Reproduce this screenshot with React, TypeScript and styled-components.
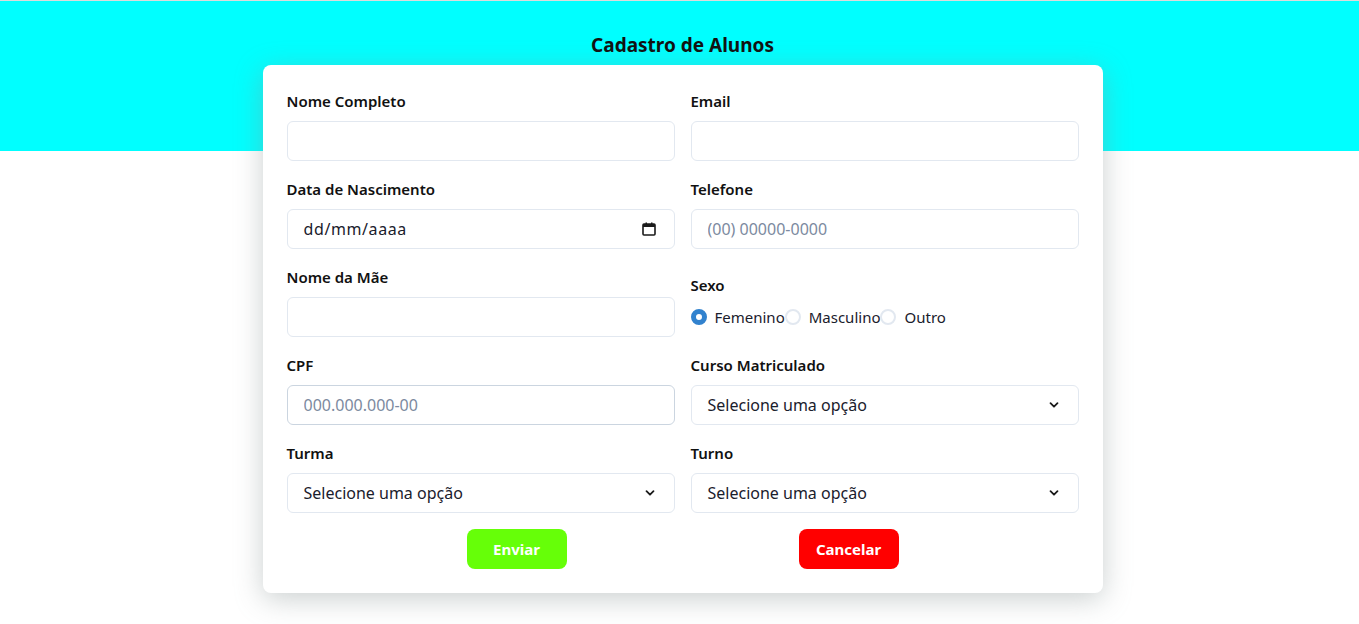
import React from "react";
import styled, { createGlobalStyle } from "styled-components";

const Global = createGlobalStyle`
  * { box-sizing: border-box; }
  html, body { margin: 0; padding: 0; background: #ffffff; }
  body { font-family: "Noto Sans", "Open Sans", sans-serif; color: #1a202c; }
`;

const Page = styled.div`
  min-height: 624px;
  border-top: 1px solid #dcdcdc;
`;

const Header = styled.header`
  height: 150px;
  background: #00ffff;
  padding: 30px 0 0 6px;
  display: flex;
  justify-content: center;
`;

const Main = styled.main`
  padding-left: 6px;
`;

const Title = styled.h1`
  margin: 0;
  font-size: 19px;
  line-height: 28px;
  font-weight: 700;
  color: #111;
`;

const Card = styled.form`
  width: 840px;
  margin: -86px auto 0;
  background: #ffffff;
  border-radius: 8px;
  padding: 24px;
  box-shadow: 0 6px 28px rgba(140, 150, 150, 0.45);
  position: relative;
`;

const Grid = styled.div`
  display: grid;
  grid-template-columns: 1fr 1fr;
  column-gap: 16px;
  row-gap: 16px;
`;

const Field = styled.div<{ $center?: boolean }>`
  display: flex;
  flex-direction: column;
  align-self: ${(p) => (p.$center ? "center" : "stretch")};
`;

const Label = styled.label`
  font-size: 15px;
  font-weight: 600;
  line-height: 24px;
  margin-bottom: 8px;
  color: #111;
`;

const Input = styled.input<{ $strong?: boolean }>`
  height: 40px;
  width: 100%;
  border: 1px solid ${(p) => (p.$strong ? "#cbd5e0" : "#e2e8f0")};
  border-radius: 6px;
  padding: 0 16px;
  font-family: inherit;
  font-size: 16px;
  color: #1a202c;
  background: #fff;
  outline: none;
  &::placeholder { color: #7c8aa0; }
`;

const FakeBox = styled.div`
  height: 40px;
  border: 1px solid #e2e8f0;
  border-radius: 6px;
  padding: 0 18px 0 16px;
  display: flex;
  align-items: center;
  justify-content: space-between;
  font-size: 16px;
  color: #1a202c;
  background: #fff;
`;

const DateText = styled.span`
  letter-spacing: 0.6px;
`;

const RadioRow = styled.div`
  display: flex;
  align-items: center;
  height: 24px;
`;

const RadioItem = styled.label`
  display: flex;
  align-items: center;
  gap: 8px;
  font-size: 15px;
  color: #1a202c;
`;

const RadioCircle = styled.span<{ $checked?: boolean }>`
  width: 16px;
  height: 16px;
  border-radius: 50%;
  border: ${(p) => (p.$checked ? "5px solid #3182ce" : "2px solid #e2e8f0")};
  background: #fff;
  flex: none;
`;

const Buttons = styled.div`
  display: flex;
  justify-content: center;
  gap: 232px;
  margin-top: 16px;
`;

const Button = styled.button<{ $bg: string }>`
  width: 100px;
  height: 40px;
  border: none;
  border-radius: 8px;
  background: ${(p) => p.$bg};
  color: #ffffff;
  font-family: inherit;
  font-size: 15px;
  font-weight: 700;
  cursor: pointer;
`;

const Calendar = () => (
  <svg width="14" height="14" viewBox="0 0 14 14" fill="none">
    <rect x="1" y="2" width="12" height="11" rx="1" stroke="#1a1a1a" strokeWidth="1.6" />
    <rect x="1" y="2" width="12" height="3" fill="#1a1a1a" />
    <rect x="3.5" y="0.5" width="1.5" height="2.5" fill="#1a1a1a" />
    <rect x="9" y="0.5" width="1.5" height="2.5" fill="#1a1a1a" />
  </svg>
);

const Chevron = () => (
  <svg width="12" height="12" viewBox="0 0 12 12" fill="none">
    <path d="M2.5 4.2 L6 7.7 L9.5 4.2" stroke="#1a1a1a" strokeWidth="1.8" strokeLinecap="round" strokeLinejoin="round" />
  </svg>
);

const Select = ({ text }: { text: string }) => (
  <FakeBox role="combobox">
    <span>{text}</span>
    <Chevron />
  </FakeBox>
);

export default function App() {
  return (
    <Page>
      <Global />
      <Header>
        <Title>Cadastro de Alunos</Title>
      </Header>
      <Main>
        <Card onSubmit={(e) => e.preventDefault()}>
          <Grid>
            <Field>
              <Label>Nome Completo</Label>
              <Input type="text" />
            </Field>
            <Field>
              <Label>Email</Label>
              <Input type="email" />
            </Field>
            <Field>
              <Label>Data de Nascimento</Label>
              <FakeBox>
                <DateText>dd/mm/aaaa</DateText>
                <Calendar />
              </FakeBox>
            </Field>
            <Field>
              <Label>Telefone</Label>
              <Input type="text" placeholder="(00) 00000-0000" />
            </Field>
            <Field>
              <Label>Nome da Mãe</Label>
              <Input type="text" />
            </Field>
            <Field $center>
              <Label>Sexo</Label>
              <RadioRow>
                <RadioItem>
                  <RadioCircle $checked />
                  Femenino
                </RadioItem>
                <RadioItem>
                  <RadioCircle />
                  Masculino
                </RadioItem>
                <RadioItem>
                  <RadioCircle />
                  Outro
                </RadioItem>
              </RadioRow>
            </Field>
            <Field>
              <Label>CPF</Label>
              <Input type="text" placeholder="000.000.000-00" $strong />
            </Field>
            <Field>
              <Label>Curso Matriculado</Label>
              <Select text="Selecione uma opção" />
            </Field>
            <Field>
              <Label>Turma</Label>
              <Select text="Selecione uma opção" />
            </Field>
            <Field>
              <Label>Turno</Label>
              <Select text="Selecione uma opção" />
            </Field>
          </Grid>
          <Buttons>
            <Button type="submit" $bg="#66ff08">Enviar</Button>
            <Button type="button" $bg="#ff0000">Cancelar</Button>
          </Buttons>
        </Card>
      </Main>
    </Page>
  );
}
